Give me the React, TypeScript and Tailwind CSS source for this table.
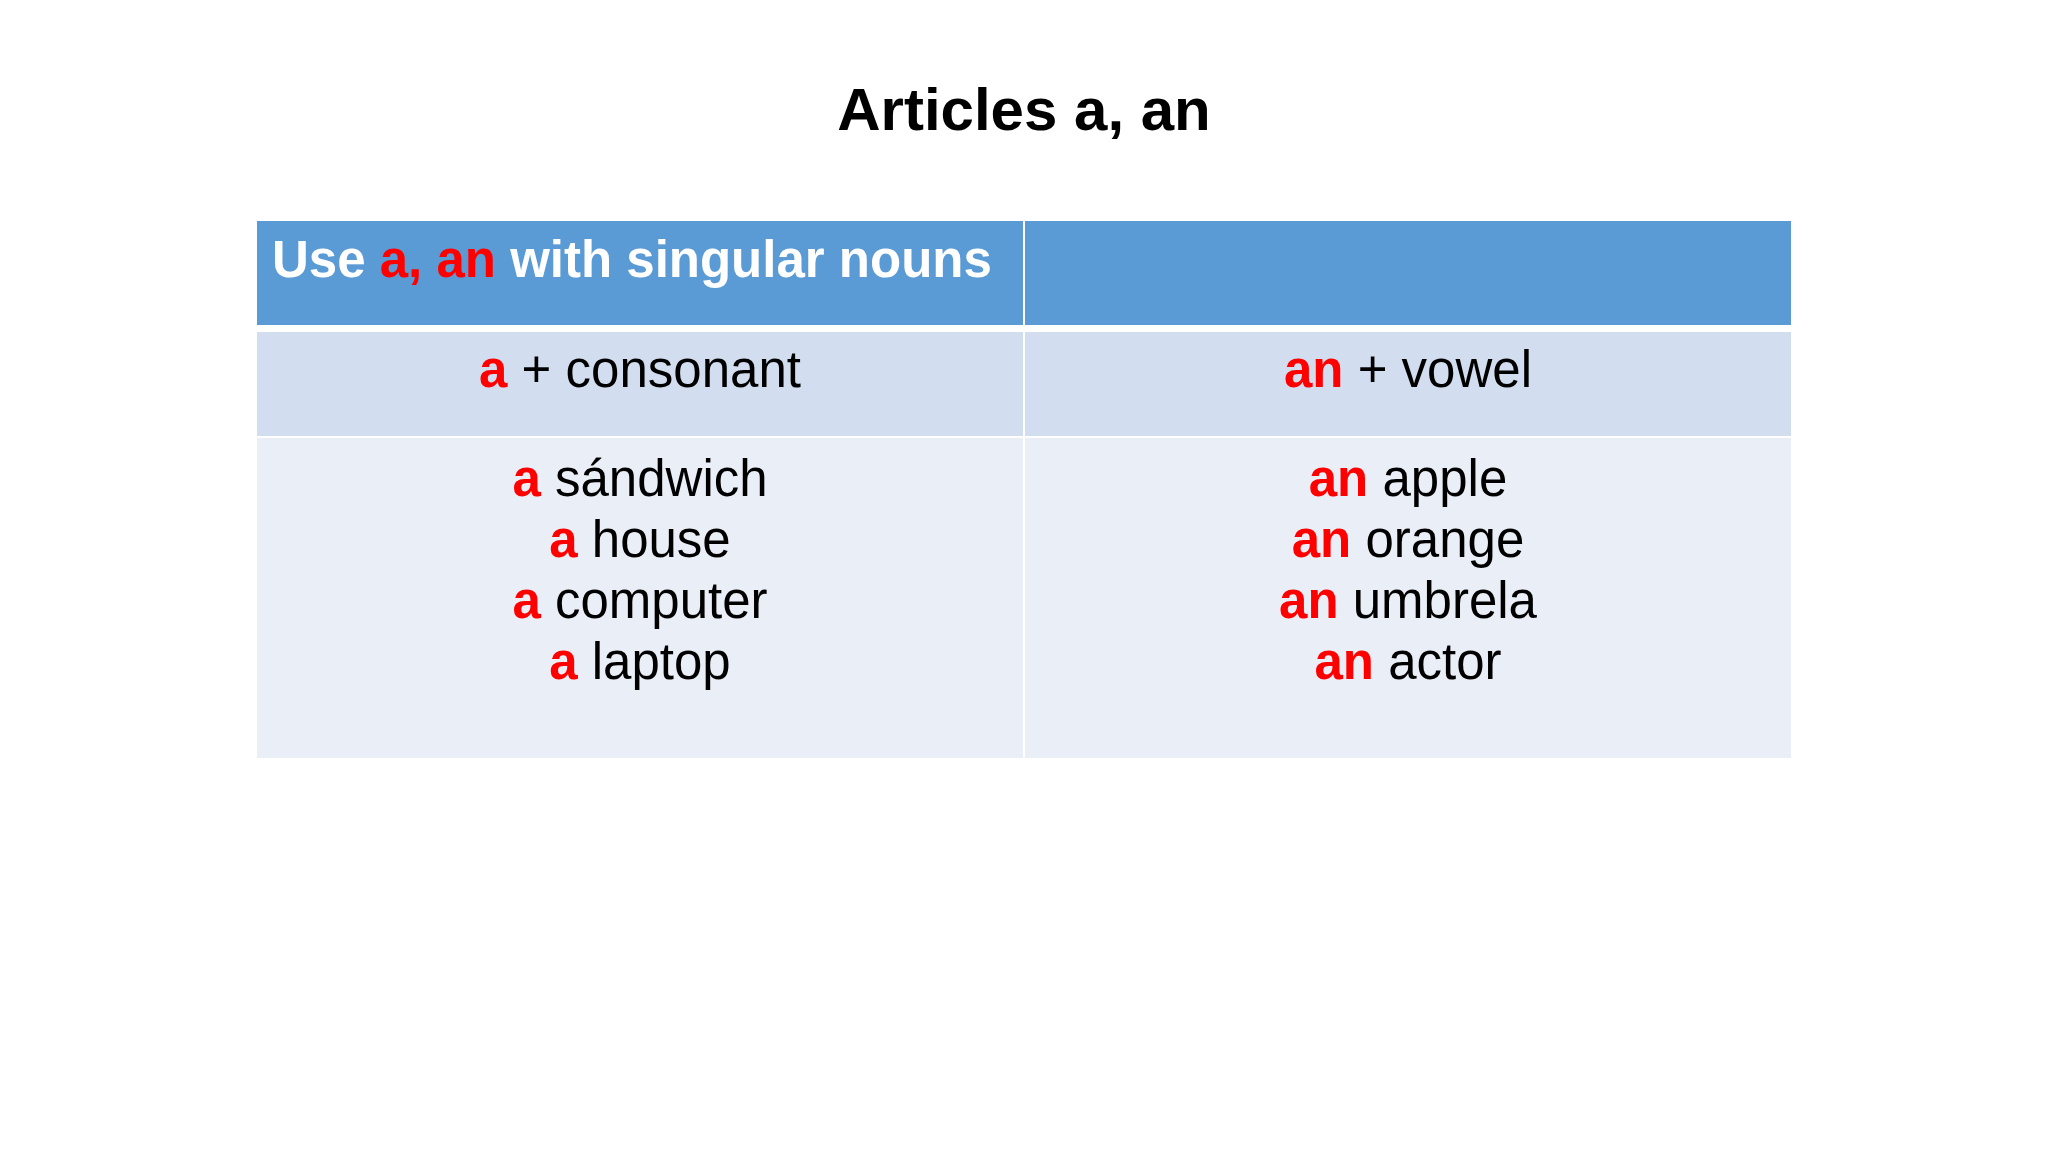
const LEFT = ["sándwich", "house", "computer", "laptop"];
const RIGHT = ["apple", "orange", "umbrela", "actor"];

function Art({ children }: { children: React.ReactNode }) {
  return <span className="font-bold text-[#ff0000]">{children}</span>;
}

export default function App() {
  return (
    <div className="h-[1152px] w-full bg-white font-['Liberation_Sans',Arial,sans-serif] text-black">
      <h1 className="pt-[75px] text-center text-[60px] font-bold leading-[70px]">Articles a, an</h1>

      <div className="mx-auto mt-[76px] flex w-[1534px] flex-col">
        {/* header row */}
        <div className="grid h-[104px] grid-cols-2 gap-x-[2px]">
          <div className="bg-[#5b9bd5] pl-[15px] pt-[10px] text-[51px] font-bold leading-[58px] text-white">
            Use <Art>a, an</Art> with singular nouns
          </div>
          <div className="bg-[#5b9bd5]" />
        </div>

        {/* rule row */}
        <div className="mt-[7px] grid h-[104px] grid-cols-2 gap-x-[2px] text-[51px] leading-[58px]">
          <div className="bg-[#d2deef] pt-[9px] text-center">
            <Art>a</Art> + consonant
          </div>
          <div className="bg-[#d2deef] pt-[9px] text-center">
            <Art>an</Art> + vowel
          </div>
        </div>

        {/* examples row */}
        <div className="mt-[2px] grid h-[320px] grid-cols-2 gap-x-[2px] text-[51px] leading-[61px]">
          <div className="flex flex-col items-center bg-[#eaeff7] pt-[10px]">
            {LEFT.map((w) => (
              <div key={w}>
                <Art>a</Art> {w}
              </div>
            ))}
          </div>
          <div className="flex flex-col items-center bg-[#eaeff7] pt-[10px]">
            {RIGHT.map((w) => (
              <div key={w}>
                <Art>an</Art> {w}
              </div>
            ))}
          </div>
        </div>
      </div>
    </div>
  );
}
